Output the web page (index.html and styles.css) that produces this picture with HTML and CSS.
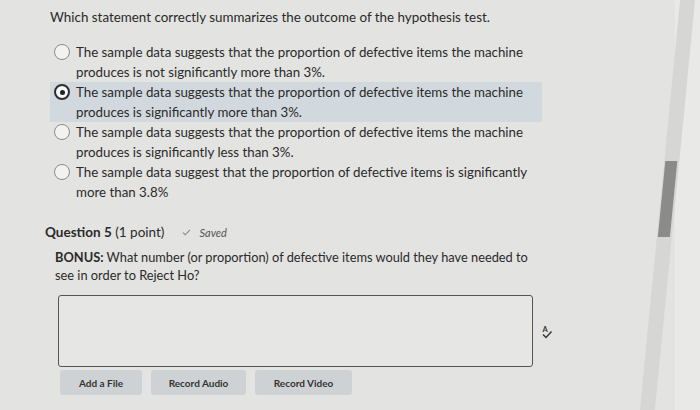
FILE: index.html
```html
<!DOCTYPE html>
<html lang="en">
<head>
<meta charset="utf-8">
<title>Quiz</title>
<link rel="stylesheet" href="styles.css">
</head>
<body>
<div class="page">
  <main class="main">
    <p class="prompt">Which statement correctly summarizes the outcome of the hypothesis test.</p>
    <div class="options">
      <div class="option">
        <span class="radio"></span>
        <span class="label">The sample data suggests that the proportion of defective items the machine<br>produces is not significantly more than 3%.</span>
      </div>
      <div class="option selected">
        <span class="radio"><span class="dot"></span></span>
        <span class="label">The sample data suggests that the proportion of defective items the machine<br>produces is significantly more than 3%.</span>
      </div>
      <div class="option">
        <span class="radio"></span>
        <span class="label">The sample data suggests that the proportion of defective items the machine<br>produces is significantly less than 3%.</span>
      </div>
      <div class="option">
        <span class="radio"></span>
        <span class="label">The sample data suggest that the proportion of defective items is significantly<br>more than 3.8%</span>
      </div>
    </div>

    <div class="qhead">
      <span class="qtitle"><b>Question 5</b> (1 point)</span>
      <span class="saved">
        <svg class="check" viewBox="0 0 10 8" width="9" height="7"><path d="M1 4.2 L3.6 6.6 L9 1" fill="none" stroke="#8a8a8a" stroke-width="1.3"/></svg>
        <i>Saved</i>
      </span>
    </div>
    <p class="bonus"><b>BONUS:</b> What number (or proportion) of defective items would they have needed to<br>see in order to Reject Ho?</p>

    <div class="answer-row">
      <div class="textbox"></div>
      <svg class="spell" viewBox="0 0 12 14" width="12" height="14">
        <text x="1.5" y="7" font-family="Lato, sans-serif" font-weight="700" font-size="7.5" fill="#333">A</text>
        <path d="M2 9.5 L5 12.5 L10.5 6.5" fill="none" stroke="#333" stroke-width="1.4"/>
      </svg>
    </div>
    <div class="buttons">
      <span class="btn btn-file">Add a File</span>
      <span class="btn">Record Audio</span>
      <span class="btn btn-video">Record Video</span>
    </div>
  </main>
  <div class="scroll-track"><div class="scroll-thumb"></div></div>
  <div class="edge"></div>
</div>
</body>
</html>
```

FILE: styles.css
```css
html, body {
  margin: 0;
  padding: 0;
}
body {
  width: 700px;
  height: 410px;
  overflow: hidden;
  background: #e3e3e1;
  font-family: Lato, "Open Sans", sans-serif;
  color: #2a2a2a;
}
.page {
  display: flex;
  height: 410px;
}
.main {
  width: 655px;
  padding: 8px 0 0 50px;
  box-sizing: border-box;
}
.prompt {
  margin: 0;
  font-size: 13.4px;
  line-height: 18px;
  white-space: nowrap;
}
.options {
  margin-top: 16px;
  width: 492px;
}
.option {
  display: flex;
  align-items: flex-start;
  height: 40px;
  font-size: 13.3px;
  line-height: 20px;
}
.option.selected {
  background: #d2d9de;
}
.radio {
  flex: none;
  width: 16px;
  height: 16px;
  margin: 2px 6px 0 4px;
  border: 1px solid #8a8a8a;
  border-radius: 50%;
  background: #f2f2f1;
  box-sizing: border-box;
  display: flex;
  align-items: center;
  justify-content: center;
}
.selected .radio {
  border: 2px solid #2e2e2e;
  background: #f7f7f7;
}
.dot {
  width: 5px;
  height: 5px;
  border-radius: 50%;
  background: #222;
}
.label {
  white-space: nowrap;
}
.qhead {
  margin: 20px 0 0 -5px;
  display: flex;
  align-items: center;
  height: 20px;
  font-size: 13.5px;
}
.qtitle b {
  font-weight: 700;
}
.saved {
  display: flex;
  align-items: center;
  margin-left: 18px;
  font-size: 11px;
  color: #555;
}
.check {
  margin-right: 8px;
}
.bonus {
  margin: 6px 0 0 5px;
  font-size: 12.8px;
  line-height: 18px;
  white-space: nowrap;
}
.answer-row {
  display: flex;
  align-items: center;
  margin: 11px 0 0 8px;
}
.textbox {
  width: 475px;
  height: 72px;
  border: 1.5px solid #555;
  border-radius: 3px;
  box-sizing: border-box;
  background: #e6e6e4;
}
.spell {
  margin-left: 8px;
  margin-top: 2px;
}
.buttons {
  display: flex;
  gap: 9px;
  margin: 3px 0 0 10px;
}
.btn {
  display: flex;
  align-items: center;
  justify-content: center;
  width: 95px;
  height: 25px;
  border-radius: 3px;
  background: #cfd2d4;
  font-size: 10px;
  font-weight: 700;
  color: #333;
}
.btn-file {
  width: 82px;
}
.btn-video {
  width: 97px;
}
.scroll-track {
  margin-left: 5px;
  width: 15px;
  height: 410px;
  background: #d6d6d4;
  transform: skewX(-5.6deg);
}
.scroll-thumb {
  margin-top: 161px;
  margin-left: 1px;
  width: 12px;
  height: 76px;
  background: #8b8b89;
}
.edge {
  flex: 1;
  background: #e9e9e8;
}
```
